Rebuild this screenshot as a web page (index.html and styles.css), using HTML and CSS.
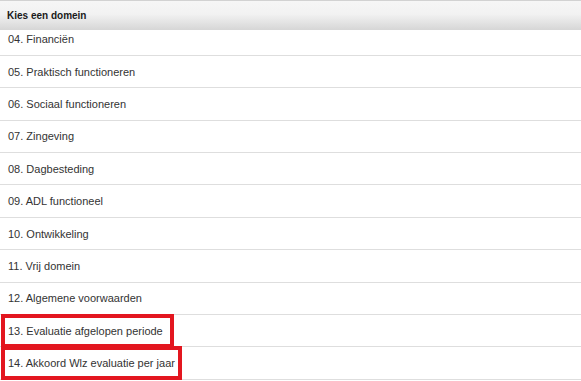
FILE: index.html
```html
<!DOCTYPE html>
<html>
<head>
<meta charset="utf-8">
<link rel="stylesheet" href="styles.css">
</head>
<body>
<div class="panel">
  <div class="header">Kies een domein</div>
  <div class="viewport">
    <ul class="list">
      <li class="row"><span class="label">04. Financiën</span></li>
      <li class="row"><span class="label">05. Praktisch functioneren</span></li>
      <li class="row"><span class="label">06. Sociaal functioneren</span></li>
      <li class="row"><span class="label">07. Zingeving</span></li>
      <li class="row"><span class="label">08. Dagbesteding</span></li>
      <li class="row"><span class="label">09. ADL functioneel</span></li>
      <li class="row"><span class="label">10. Ontwikkeling</span></li>
      <li class="row"><span class="label">11. Vrij domein</span></li>
      <li class="row"><span class="label">12. Algemene voorwaarden</span></li>
      <li class="row hl"><span class="label">13. Evaluatie afgelopen periode</span></li>
      <li class="row hl"><span class="label">14. Akkoord Wlz evaluatie per jaar</span></li>
    </ul>
  </div>
</div>
</body>
</html>
```

FILE: styles.css
```css
html, body {
  margin: 0;
  padding: 0;
  background: #fff;
}
body {
  width: 581px;
  height: 381px;
  overflow: hidden;
  font-family: "Liberation Sans", Arial, sans-serif;
}
.panel {
  display: flex;
  flex-direction: column;
  height: 381px;
}
.header {
  box-sizing: border-box;
  height: 30px;
  border-top: 1px solid #d2d2d2;
  background: linear-gradient(to bottom, #f6f6f6 0%, #f2f2f2 45%, #d6d6d6 100%);
  display: flex;
  align-items: center;
  padding-left: 7px;
  font-size: 10px;
  font-weight: bold;
  color: #1a1a1a;
  flex: none;
}
.viewport {
  flex: 1;
  overflow: hidden;
}
.list {
  list-style: none;
  margin: -6.5px 0 0 0;
  padding: 0;
}
.row {
  box-sizing: border-box;
  height: 32.4px;
  border-bottom: 1px solid #dedede;
  display: flex;
  align-items: center;
  padding-left: 5px;
  font-size: 11px;
  color: #333;
}
.label {
  display: inline-block;
  line-height: 26px;
  height: 26px;
  padding: 0 3px;
}
.hl .label {
  outline: 4px solid #e3161f;
  padding-right: 3px;
}
.hl:nth-child(10) .label {
  padding-right: 7px;
}
```
